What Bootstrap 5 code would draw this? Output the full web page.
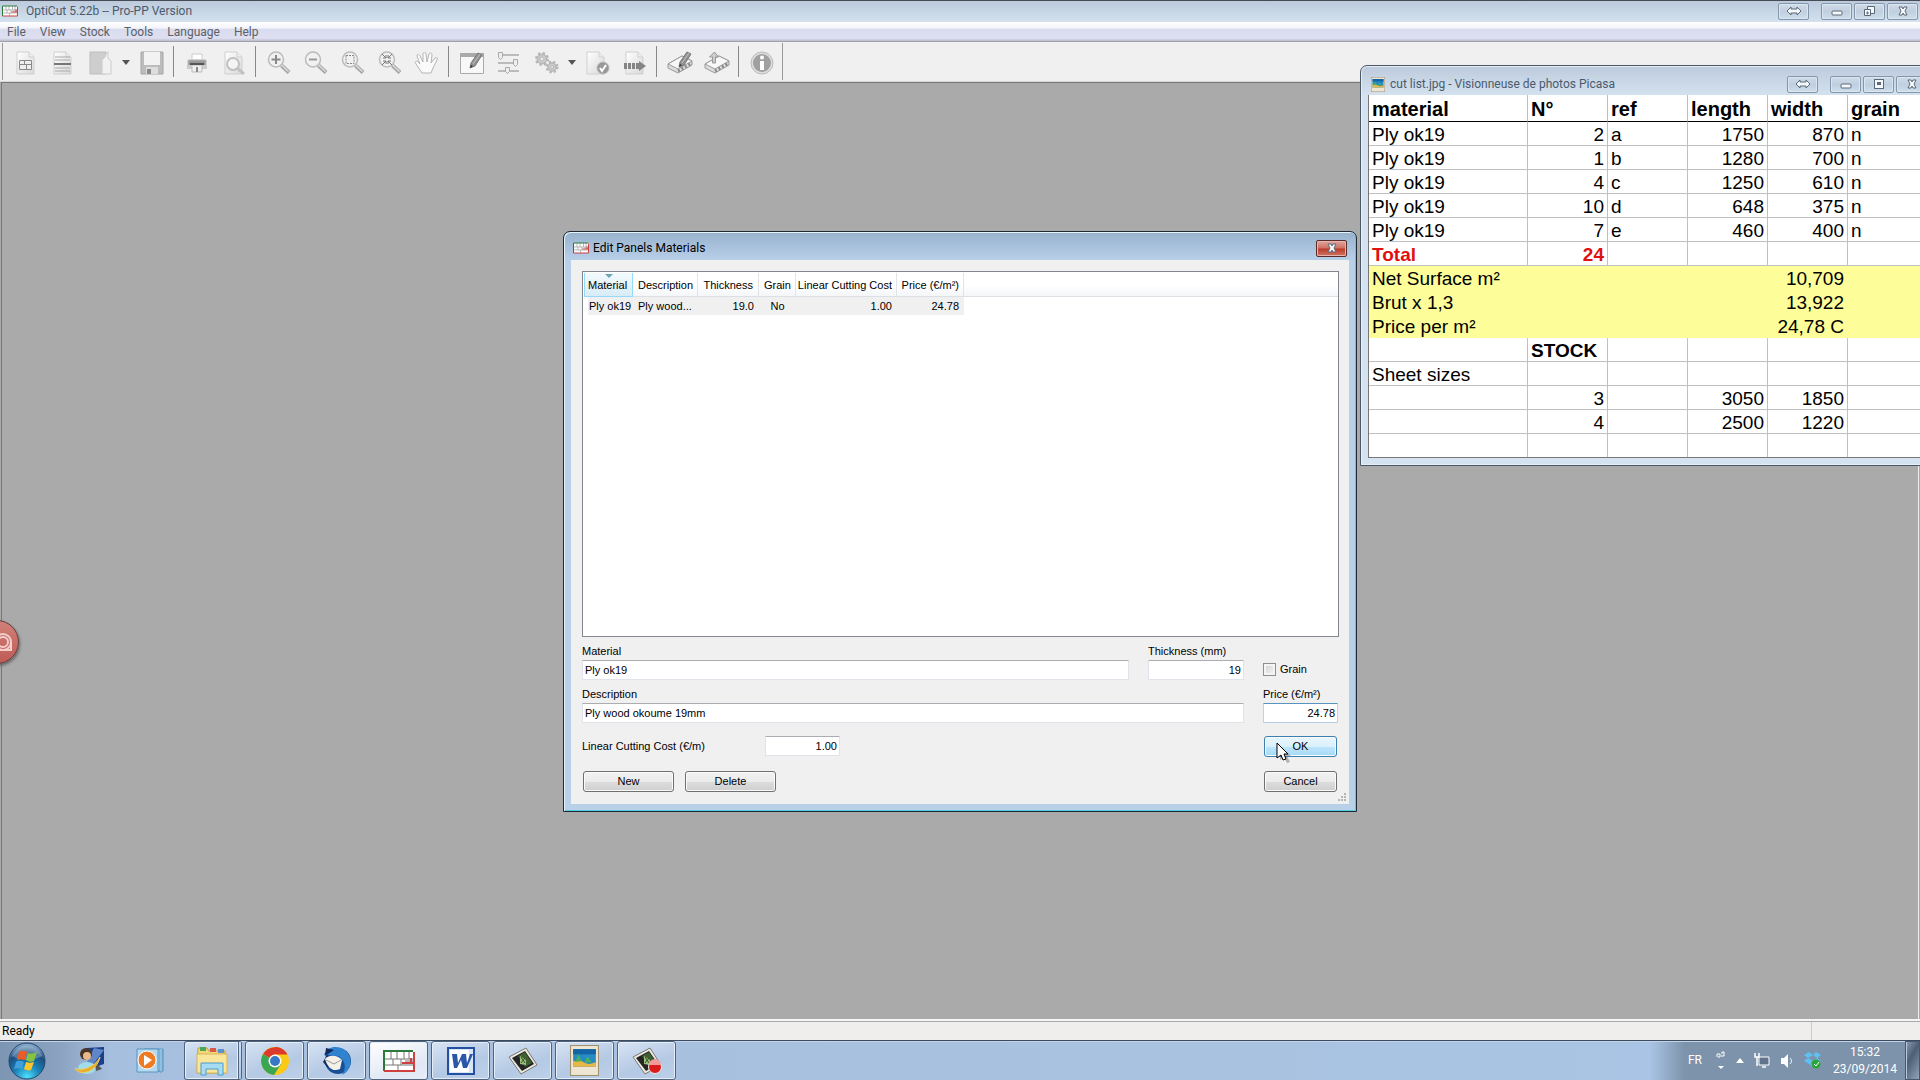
<!DOCTYPE html>
<html lang="en">
<head>
<meta charset="utf-8">
<meta name="viewport" content="width=device-width, initial-scale=1">
<title>OptiCut 5.22b -- Pro-PP Version</title>
<link href="https://cdn.jsdelivr.net/npm/bootstrap@5.3.0/dist/css/bootstrap.min.css" rel="stylesheet">
<style>
  body { font-family: Roboto, "Open Sans", sans-serif; font-size: 12px; line-height: 16px; background: #aaa; color: #000; }
  svg { display: block; flex: none; }
  button { font: inherit; color: inherit; }
  .aero-bar { height: 22px; background: linear-gradient(#bccadc, #d3e2ee); border-top: 1px solid #454c58; color: #4a5a6c; padding: 0 2px 1px; }
  .win-btns { display: flex; gap: 2px; }
  .win-btns button:first-child { margin-right: 10px; }
  .win-btn { width: 31px; height: 17px; border: 1px solid #8496ab; border-radius: 2px; background: linear-gradient(#d0dbe8, #c0cfdf 50%, #cfdeeb); padding: 0; flex: none; display: flex; align-items: center; justify-content: center; box-shadow: inset 0 0 0 1px #dbe6f0; }
  .menu-bar { height: 20px; background: linear-gradient(#fff, #f4f5fb 30%, #d9dcee 40%, #dee0f2 85%, #bbbccb); border-bottom: 1px solid #a0a0a8; padding: 1px 7px 0; gap: 14px; }
  .menu-bar a { color: #5d6168; text-decoration: none; }
  .tool-bar { height: 40px; background: #f0f0f0; border-bottom: 1px solid #d8d8d8; padding-left: 2px; }
  .tool-group { border-left: 1px solid #999; border-right: 1px solid #999; padding: 0 2px 0 4px; height: 37px; }
  .tool-btn { width: 37px; height: 37px; border: 0; background: none; padding: 2px 0 0; display: flex; align-items: center; justify-content: center; }
  .tool-arrow { width: 15px; }
  .tool-sep { width: 8px; height: 31px; }
  .tool-sep::before { content: ""; display: block; width: 1px; height: 100%; background: #888; margin-left: 3px; }
  .client { background: #aaa; border: 1px solid #777; border-right-color: #eee; border-bottom: 0; margin: 0 1px; }
  .status-bar { height: 19px; background: #f0eeed; border-top: 1px solid #a8a8a8; box-shadow: 0 -2px 0 #f5f5f5; padding-left: 2px; }
  .status-pane { width: 109px; border-left: 1px solid #ccc; }

  .photo-win { position: absolute; top: 65px; right: -18px; width: 578px; border: 1px solid #4d5866; border-radius: 7px 7px 0 0; background: linear-gradient(#bccadc, #d5e3f0 30px); padding: 0 7px 7px; color: #4a5a6c; box-shadow: inset 0 0 0 1px #e4eef8; }
  .photo-title { height: 29px; padding: 7px 3px 0 3px; gap: 5px; }
  .sheet { width: 100%; background: #fff; border: 1px solid #777; border-top: 0; font-family: "Liberation Sans", Arial, sans-serif; font-size: 19px; line-height: 21px; color: #000; table-layout: fixed; border-collapse: separate; border-spacing: 0; }
  .sheet td, .sheet th { border-right: 1px solid #c0c0c0; border-bottom: 1px solid #c0c0c0; height: 24px; padding: 2px 3px 0; white-space: nowrap; }
  .sheet th { font-size: 20px; height: 27px; line-height: 24px; border-bottom-color: #000; }
  .sheet tr:last-child td { height: 23px; border-bottom: 0; }
  .sheet .yellow td { background: #fdfd99; border-color: #fdfd99; }
  .sheet .total-row { color: #e01010; }
  .col-wide { width: 159px; }
  .col-num { width: 80px; }

  .dialog-layer { position: absolute; inset: 0 0 38px; pointer-events: none; }
  .panel-win { position: relative; pointer-events: auto; width: 794px; border: 1px solid #1d2a35; border-radius: 7px 7px 0 0; background: linear-gradient(#98b2cd, #b9d0e9 29px); padding: 0 7px 7px; box-shadow: inset 1px 1px 0 #e6f2fb, inset -1px -1px 0 #51d0e4; }
  .panel-title { height: 28px; padding: 5px 2px 0 2px; }
  .close-btn { width: 31px; height: 17px; border: 1px solid #5b2a2a; border-radius: 2px; padding: 0; background: linear-gradient(#dea79f, #cf6f62 48%, #bb3a29 52%, #ce7564); display: flex; align-items: center; justify-content: center; box-shadow: inset 0 0 0 1px #e6b4ac; }
  .panel-body { background: #f0f0f0; font-family: "Liberation Sans", Arial, sans-serif; font-size: 11px; padding: 11px 11px 12px; position: relative; }
  .list-pane { height: 366px; background: #fff; border: 1px solid #828790; padding: 1px 0 0 1px; margin-right: -1px; }
  .list-head { background: linear-gradient(#fff 12px, #f4f6f9 23px, #dcdfe4 23px, #dcdfe4 24px, #fff 24px); }
  .grid-list { table-layout: fixed; width: 380px; border-collapse: separate; border-spacing: 0; line-height: 16px; }
  .grid-list th { height: 24px; font-weight: 400; padding: 2px 5px 0; border-right: 1px solid #e0e3e8; border-bottom: 1px solid #dcdfe4; background: linear-gradient(#fff 50%, #f4f6f9); white-space: nowrap; }
  .grid-list th.sorted { background: linear-gradient(#f3fafd, #d8ecf6); border: 1px solid #96d9f9; border-top: 0; position: relative; padding: 2px 3px 0; }
  .grid-list th.tight { padding-left: 0; padding-right: 4px; }
  .grid-list th.sorted svg { position: absolute; top: 1px; left: 20px; }
  .grid-list td { height: 18px; padding: 0 5px; background: #f0f0f0; white-space: nowrap; }
  .grid-list td:first-child { background: linear-gradient(90deg, #fff 4px, #f0f0f0 4px); }
  .c-mat { width: 49px; } .c-desc { width: 65px; } .c-thick { width: 61px; } .c-grain { width: 37px; } .c-cost { width: 101px; } .c-price { width: 67px; }
  .field-row { gap: 19px; padding-top: 6px; }
  .narrow { width: 75px; }
  .medium { width: 96px; }
  .text-field { display: block; width: 100%; height: 20px; border: 1px solid #e2e3ea; border-top-color: #abadb3; border-radius: 1px; padding: 0 2px; background: #fff; font: inherit; line-height: 16px; color: #000; outline: 0; }
  .text-field.active-field { border-color: #5794bf #b7d5ea #b5cfe7; }
  .panel-body label { display: block; line-height: 17px; }
  .grain-box { appearance: none; width: 13px; height: 13px; border: 1px solid #8e8f8f; background: linear-gradient(135deg, #cfd2d5, #f6f6f6); box-shadow: inset 0 0 0 2px #f4f4f4; margin: 0; }
  .grain-row { height: 37px; padding-top: 17px; }
  .push-btn { width: 91px; height: 21px; padding: 0; border: 1px solid #707070; border-radius: 3px; background: linear-gradient(#f2f2f2, #ebebeb 50%, #ddd 51%, #cfcfcf); box-shadow: inset 0 0 0 1px #fafafa; line-height: 16px; }
  .side-btn { width: 73px; margin-right: 1px; }
  .hot-btn { border-color: #3c7fb1; background: linear-gradient(#eaf6fd, #d9f0fc 50%, #bee6fd 51%, #a7d9f5); }
  .cost-row { padding-top: 13px; }
  .cost-label { width: 183px; }
  .action-row { padding: 14px 0 0 1px; gap: 11px; }
  .pointer { position: absolute; left: 705px; top: 482px; }
  .grip { position: absolute; right: 2px; bottom: 2px; }
  .rec-badge { position: absolute; left: -25px; top: 620px; width: 44px; height: 44px; border-radius: 50%; background: linear-gradient(#d08079, #c05b55); border: 1px solid #5e3b3a; box-shadow: 1px 2px 3px #666; }
  .rec-badge svg { position: absolute; left: 18px; top: 12px; }

  .task-bar { height: 40px; border-top: 1px solid #3c4c60; background: linear-gradient(90deg, #7c95b3, #8ba3c1 60px, #a6bfde 110px, #a9c2e0 60%, #a9c4e4 calc(100% - 270px), #7d93ab calc(100% - 235px), #7d93ab); box-shadow: inset 0 1px 0 #c3d3e8; }
  .task-btn { height: 39px; border: 0; background: none; padding: 0; display: flex; align-items: center; justify-content: center; width: 60px; }
  .task-btn.task-start { justify-content: flex-start; padding-left: 8px; }
  .task-btn.running { width: 59px; border: 1px solid #50647e; border-radius: 3px; background: linear-gradient(160deg, #d7e3f3, #b4c9e4 60%, #bdd0e8); box-shadow: inset 0 0 0 1px #e4edf8; }
  .task-btn.current { background: linear-gradient(160deg, #fff, #e0e8f4 70%, #e8eef8); }
  .task-btn.stacked { width: 58px; border-right: 4px double #50647e; }
  .task-apps { gap: 3px; padding-left: 4px; }
  .tray { color: #fff; line-height: 17px; gap: 10px; }
  .clock { width: 68px; text-align: center; }
  .desk-gap { padding-left: 0; margin-left: -4px; }
  .show-desk { width: 15px; height: 39px; border: 1px solid #47586c; background: linear-gradient(120deg, #8b9db2, #4d5f75 40%, #8fa3ba); padding: 0; box-shadow: inset 1px 0 0 #b9c8d8; }
</style>
<script src="https://cdn.jsdelivr.net/npm/bootstrap@5.3.0/dist/js/bootstrap.bundle.min.js"></script>
</head>
<body class="vh-100 overflow-hidden position-relative d-flex flex-column">

<svg width="0" height="0" class="position-absolute" aria-hidden="true">
  <defs>
    <linearGradient id="gl" x1="0" y1="0" x2="1" y2="1"><stop offset="0" stop-color="#fff"/><stop offset="1" stop-color="#d8d8d8"/></linearGradient>
    <radialGradient id="orb" cx=".5" cy=".95" r=".9"><stop offset="0" stop-color="#4fe0ff"/><stop offset=".4" stop-color="#1a83b8"/><stop offset=".75" stop-color="#1c4f80"/><stop offset="1" stop-color="#7fa5c6"/></radialGradient>
    <symbol id="app" viewBox="0 0 32 22"><rect x="1" y="1" width="30" height="20" fill="#fff"/><path d="M1 9h30M1 15h30M8 1v8M14 1v8M21 1v8M26 1v8M10 9v6M18 9v6M15 15v6M22 11h8" stroke="#777" stroke-width="1" fill="none"/><path d="M1 21V1h29" stroke="#2b7a3c" stroke-width="2" fill="none"/><path d="M1 21h30V2M19 13h12M28 8v5" stroke="#cf4040" stroke-width="2" fill="none"/></symbol>
    <symbol id="page" viewBox="0 0 24 24"><path d="M3 1h12l5 5v17H3z" fill="url(#gl)" stroke="#cfcfcf"/><path d="M15 1v5h5" fill="#eee" stroke="#cfcfcf"/></symbol>
    <symbol id="lens" viewBox="0 0 24 24"><path d="M14.500 14.500l7.500 7" stroke="#a6a6a6" stroke-width="4"/><path d="M14.500 14l7 6.500" stroke="#ddd" stroke-width="1.500"/><circle cx="9" cy="8.500" r="7.500" fill="#f1f1f1" stroke="#bbb" stroke-width="1.500"/></symbol>
    <symbol id="w-move" viewBox="0 0 16 10"><path d="M1 5l4-4v2h6V1l4 4-4 4V7H5v2z" fill="#f5f8fb" stroke="#5a6878"/></symbol>
    <symbol id="w-min" viewBox="0 0 12 10"><rect x="1" y="5" width="10" height="4" rx="1" fill="#f5f8fb" stroke="#5a6878"/></symbol>
    <symbol id="w-close" viewBox="0 0 12 10"><path d="M2 1h3l1 2 1-2h3L8 5l2 4H7L6 7 5 9H2l2-4z" fill="#f8fafc" stroke="#5a6878"/></symbol>
    <symbol id="photo" viewBox="0 0 28 30"><rect x=".5" y=".5" width="27" height="29" fill="#eee5d2" stroke="#a18f6d"/><path d="M3 4h22v17H3z" fill="#248bc4"/><path d="M3 4h22v5H3z" fill="#1465a5"/><path d="M5 17l3-8 4 8zM14 17l3-6 4 6z" fill="#4fae5a"/><path d="M3 15c5 3 6-1 11 2s7 0 11 0v4H3z" fill="#e7b845"/></symbol>
    <symbol id="cam" viewBox="0 0 32 28"><path d="M2 10L19 1l11 17-16 9z" fill="#eceadf" stroke="#777"/><path d="M5 11l13-7 9 13-12 7z" fill="#242424"/><path d="M11 9l7-4 7 11-7 4z" fill="#3f5f33"/><path d="M13 9l6 4v5l-6-1z" fill="#9cc07a"/><path d="M14 10l4 6M18 11l-4 5" stroke="#35512b"/></symbol>
    <symbol id="panel" viewBox="0 0 26 24"><path d="M1 13L15 5l10 5v4L11 22 1 17z" fill="#ddd" stroke="#999"/><path d="M1 13l10 5 14-8L15 5z" fill="#f8f8f8" stroke="#999"/><path d="M11 20l14-8" stroke="#888" stroke-width="3" stroke-dasharray="2 2"/></symbol>
    <symbol id="pencil" viewBox="0 0 14 18"><path d="M1 17l1-5L9 2l4 2-7 11z" fill="#929292" stroke="#777"/><path d="M4 13l7-10" stroke="#c0c0c0"/><path d="M1 17l1-3 2 1z" fill="#333"/></symbol>
  </defs>
</svg>

<header>
  <div class="aero-bar d-flex align-items-center">
    <svg width="16" height="12"><use href="#app"/></svg>
    <span class="ms-2 me-auto">OptiCut 5.22b -- Pro-PP Version</span>
    <div class="win-btns">
      <button class="win-btn" aria-label="Move"><svg width="16" height="10"><use href="#w-move"/></svg></button>
      <button class="win-btn" aria-label="Minimise"><svg width="12" height="10"><use href="#w-min"/></svg></button>
      <button class="win-btn" aria-label="Restore"><svg width="13" height="12" fill="#f5f8fb" stroke="#5a6878"><path d="M4.500 1.500h7v7h-7z"/><path d="M1.500 4.500h6v6h-6z"/><path d="M4 7h1v2H4z"/></svg></button>
      <button class="win-btn" aria-label="Close"><svg width="12" height="10"><use href="#w-close"/></svg></button>
    </div>
  </div>
  <nav class="menu-bar d-flex align-items-center" aria-label="Menu">
    <a href="#">File</a><a href="#">View</a><a href="#">Stock</a><a href="#">Tools</a><a href="#">Language</a><a href="#">Help</a>
  </nav>
  <div class="tool-bar d-flex align-items-center">
    <div class="tool-group d-flex align-items-center">
      <button class="tool-btn" aria-label="New job"><svg width="24" height="24"><use href="#page"/><path d="M5.500 9.500h12v9h-12zM5.500 13.500h12M10.500 9.500v4M12.500 13.500v5" fill="#eee" stroke="#888"/></svg></button>
      <button class="tool-btn" aria-label="Bars"><svg width="24" height="24"><use href="#page"/><path d="M4 6h15M4 9h15M4 17h15M4 20h15" stroke="#aaa"/><path d="M3 13h17" stroke="#777" stroke-width="2"/></svg></button>
      <button class="tool-btn" aria-label="Open"><svg width="24" height="24"><path d="M2 1h16v22H2z" fill="#cecece" stroke="#bdbdbd"/><path d="M14 23V9l3-3c2-4 1-5 3-5v6l3 3v13z" fill="#f1f1f1" stroke="#ccc"/></svg></button>
      <button class="tool-btn tool-arrow" aria-label="Open recent"><svg width="8" height="5"><path d="M0 0h8L4 5z" fill="#555"/></svg></button>
      <button class="tool-btn" aria-label="Save"><svg width="24" height="24"><path d="M1 1h22v22H1z" fill="#bcbcbc" stroke="#a5a5a5"/><path d="M4 1h16v13H4z" fill="#f2f2f2"/><path d="M6 16h12v7H6z" fill="#ddd"/><path d="M7 18h4v5H7z" fill="#888"/></svg></button>
      <span class="tool-sep"></span>
      <button class="tool-btn" aria-label="Print"><svg width="22" height="22"><path d="M6 2h10v6H6z" fill="#fff" stroke="#ccc"/><path d="M2 8h18v8H2z" fill="#999" stroke="#bbb"/><path d="M1 13h20v4H1z" fill="#ccc"/><path d="M6 13h10v7H6z" fill="#eee" stroke="#bbb"/><path d="M4 12h14" stroke="#555" stroke-width="2"/><path d="M10 15h2v5h-2z" fill="#888"/></svg></button>
      <button class="tool-btn" aria-label="Preview"><svg width="24" height="24"><use href="#page"/><path d="M15 17l7 6" stroke="#c2c2c2" stroke-width="3"/><circle cx="11" cy="13" r="6" fill="#f4f4f4" stroke="#c0c0c0" stroke-width="2"/></svg></button>
      <span class="tool-sep"></span>
      <button class="tool-btn" aria-label="Zoom in"><svg width="24" height="24"><use href="#lens"/><path d="M9 4v9M4.500 8.500h9" stroke="#888" stroke-width="2"/></svg></button>
      <button class="tool-btn" aria-label="Zoom out"><svg width="24" height="24"><use href="#lens"/><path d="M5 8.500h8" stroke="#999" stroke-width="2"/></svg></button>
      <button class="tool-btn" aria-label="Zoom area"><svg width="24" height="24"><use href="#lens"/><path d="M5 4.500h8v8H5z" fill="none" stroke="#888" stroke-dasharray="2 1"/></svg></button>
      <button class="tool-btn" aria-label="Zoom fit"><svg width="24" height="24"><use href="#lens"/><path d="M4 3l4 4M14 3l-4 4M4 14l4-4M14 14l-4-4M8 4v3H5M10 4v3h3M8 13v-3H5M10 13v-3h3" fill="none" stroke="#777"/></svg></button>
      <button class="tool-btn" aria-label="Pan"><svg width="26" height="24"><path d="M8 22L2 13c-2-3 1-4 3-1l1 1-3-8c0-2 2-2 3 0l3 6L9 3c0-2 3-2 3 0l1 8 2-8c1-2 3-1 3 1l-1 8 4-5c2-1 3 0 2 2l-4 8-2 5z" fill="#fafafa" stroke="#b5b5b5"/></svg></button>
      <span class="tool-sep"></span>
      <button class="tool-btn" aria-label="Edit"><svg width="26" height="24"><path d="M1.500 2.500h23v20h-23z" fill="#f8f8f8" stroke="#aaa"/><path d="M1 2h24v4H1z" fill="#aaa"/><use href="#pencil" x="10" y="0" width="14" height="18"/></svg></button>
      <button class="tool-btn" aria-label="Options"><svg width="24" height="24" fill="#eee" stroke="#a9a9a9"><path d="M6 4h16M1 12h15M1 20h8M13 20h9" stroke="#bbb" stroke-width="2"/><path d="M1.500 1.500h4v5l-2 2-2-2zM16.500 8.500h4v5l-2 2-2-2zM8.500 16.500h4v4l-2 2-2-2z"/></svg></button>
      <button class="tool-btn" aria-label="Optimise"><svg width="26" height="24" fill="#ccc" stroke="#b5b5b5"><circle cx="9" cy="8" r="5.500" stroke-width="3" stroke-dasharray="2.300 2"/><circle cx="9" cy="8" r="4.500"/><circle cx="9" cy="8" r="2" fill="#eee"/><circle cx="19" cy="16" r="5" stroke-width="3" stroke-dasharray="2 2"/><circle cx="19" cy="16" r="4"/><circle cx="19" cy="16" r="1.500" fill="#eee"/></svg></button>
      <button class="tool-btn tool-arrow" aria-label="Optimise options"><svg width="8" height="5"><path d="M0 0h8L4 5z" fill="#555"/></svg></button>
      <button class="tool-btn" aria-label="Check"><svg width="24" height="24"><use href="#page" x="-2"/><circle cx="17" cy="17" r="6" fill="#999" stroke="#bbb"/><path d="M14 17l2 3 4-6" fill="none" stroke="#fff" stroke-width="2"/></svg></button>
      <button class="tool-btn" aria-label="Export"><svg width="24" height="24"><use href="#page"/><path d="M1 12h3v6H1zM5 12h3v6H5zM9 12h3v6H9zM13 12h3v-2l7 5-7 5v-2h-3z" fill="#858585"/></svg></button>
      <span class="tool-sep"></span>
      <button class="tool-btn" aria-label="Edit panels"><svg width="26" height="24"><use href="#panel"/><use href="#pencil" x="11" y="-1" width="14" height="18"/></svg></button>
      <button class="tool-btn" aria-label="Load panels"><svg width="26" height="24"><use href="#panel"/><path d="M8.500 12V6h-3l5-5 4 5h-3v6z" fill="#ccc" stroke="#999"/></svg></button>
      <span class="tool-sep"></span>
      <button class="tool-btn" aria-label="About"><svg width="24" height="24"><circle cx="12" cy="12" r="11" fill="#ddd" stroke="#bbb"/><circle cx="12" cy="12" r="9" fill="#a0a0a0"/><path d="M10 10h4v9h-4z" fill="#fff"/><circle cx="12" cy="6.500" r="2" fill="#fff"/></svg></button>
    </div>
  </div>
</header>

<main class="client flex-grow-1"></main>

<div class="status-bar d-flex justify-content-between align-items-center">
  <span>Ready</span><span class="status-pane align-self-stretch"></span>
</div>

<div class="rec-badge"><svg width="24" height="22" fill="none" stroke="#f2cdc9" stroke-width="2"><circle cx="9" cy="9" r="8"/><circle cx="9" cy="9" r="5"/><path d="M17 9v8H5"/></svg></div>

<section class="photo-win" aria-label="cut list.jpg">
  <div class="photo-title d-flex align-items-center">
    <svg width="14" height="15"><use href="#photo"/></svg>
    <span class="me-auto">cut list.jpg - Visionneuse de photos Picasa</span>
    <div class="win-btns">
      <button class="win-btn" aria-label="Move"><svg width="16" height="10"><use href="#w-move"/></svg></button>
      <button class="win-btn" aria-label="Minimise"><svg width="12" height="10"><use href="#w-min"/></svg></button>
      <button class="win-btn" aria-label="Maximise"><svg width="12" height="10" stroke="#5a6878"><rect x="1.500" y=".5" width="9" height="9" fill="#f5f8fb"/><rect x="4.500" y="3.500" width="3" height="2" fill="#5a6878"/></svg></button>
      <button class="win-btn" aria-label="Close"><svg width="12" height="10"><use href="#w-close"/></svg></button>
    </div>
  </div>
  <table class="sheet">
    <colgroup><col class="col-wide"><col class="col-num"><col class="col-num"><col class="col-num"><col class="col-num"><col></colgroup>
    <thead><tr><th>material</th><th>N°</th><th>ref</th><th>length</th><th>width</th><th>grain</th></tr></thead>
    <tbody>
      <tr><td>Ply ok19</td><td class="text-end">2</td><td>a</td><td class="text-end">1750</td><td class="text-end">870</td><td>n</td></tr>
      <tr><td>Ply ok19</td><td class="text-end">1</td><td>b</td><td class="text-end">1280</td><td class="text-end">700</td><td>n</td></tr>
      <tr><td>Ply ok19</td><td class="text-end">4</td><td>c</td><td class="text-end">1250</td><td class="text-end">610</td><td>n</td></tr>
      <tr><td>Ply ok19</td><td class="text-end">10</td><td>d</td><td class="text-end">648</td><td class="text-end">375</td><td>n</td></tr>
      <tr><td>Ply ok19</td><td class="text-end">7</td><td>e</td><td class="text-end">460</td><td class="text-end">400</td><td>n</td></tr>
      <tr class="fw-bold total-row"><td>Total</td><td class="text-end">24</td><td></td><td></td><td></td><td></td></tr>
      <tr class="yellow"><td>Net Surface m²</td><td></td><td></td><td></td><td class="text-end">10,709</td><td></td></tr>
      <tr class="yellow"><td>Brut x 1,3</td><td></td><td></td><td></td><td class="text-end">13,922</td><td></td></tr>
      <tr class="yellow"><td>Price per m²</td><td></td><td></td><td></td><td class="text-end">24,78 C</td><td></td></tr>
      <tr><td></td><td class="fw-bold">STOCK</td><td></td><td></td><td></td><td></td></tr>
      <tr><td>Sheet sizes</td><td></td><td></td><td></td><td></td><td></td></tr>
      <tr><td></td><td class="text-end">3</td><td></td><td class="text-end">3050</td><td class="text-end">1850</td><td></td></tr>
      <tr><td></td><td class="text-end">4</td><td></td><td class="text-end">2500</td><td class="text-end">1220</td><td></td></tr>
      <tr><td></td><td></td><td></td><td></td><td></td><td></td></tr>
    </tbody>
  </table>
</section>

<div class="dialog-layer d-flex align-items-center justify-content-center">
  <section class="panel-win" aria-label="Edit Panels Materials">
    <div class="panel-title d-flex align-items-center">
      <svg width="16" height="12"><use href="#app"/></svg>
      <span class="ms-1 me-auto">Edit Panels Materials</span>
      <button class="close-btn" aria-label="Close"><svg width="12" height="10"><use href="#w-close"/></svg></button>
    </div>
    <form class="panel-body">
      <div class="list-pane">
        <div class="list-head">
          <table class="grid-list">
            <colgroup><col class="c-mat"><col class="c-desc"><col class="c-thick"><col class="c-grain"><col class="c-cost"><col class="c-price"></colgroup>
            <thead><tr><th class="sorted"><svg width="8" height="4"><path d="M0 0h8L4 4z" fill="#6ea3b8"/></svg>Material</th><th>Description</th><th class="text-end">Thickness</th><th class="text-center">Grain</th><th class="text-end tight">Linear Cutting Cost</th><th class="text-end tight">Price (€/m²)</th></tr></thead>
            <tbody><tr><td>Ply ok19</td><td>Ply wood...</td><td class="text-end">19.0</td><td class="text-center">No</td><td class="text-end">1.00</td><td class="text-end">24.78</td></tr></tbody>
          </table>
        </div>
      </div>
      <div class="field-row d-flex">
        <div class="flex-grow-1"><label for="mat">Material</label><input class="text-field" id="mat" type="text" value="Ply ok19"></div>
        <div class="medium"><label for="thick">Thickness (mm)</label><input class="text-field text-end" id="thick" type="text" value="19"></div>
        <div class="narrow grain-row d-flex align-items-center"><input class="grain-box" id="grain" type="checkbox"><label class="ms-1" for="grain">Grain</label></div>
      </div>
      <div class="field-row d-flex">
        <div class="flex-grow-1"><label for="desc">Description</label><input class="text-field" id="desc" type="text" value="Ply wood okoume 19mm"></div>
        <div class="narrow"><label for="price">Price (€/m²)</label><input class="text-field active-field text-end" id="price" type="text" value="24.78"></div>
      </div>
      <div class="cost-row d-flex align-items-center">
        <label class="cost-label" for="cost">Linear Cutting Cost (€/m)</label>
        <div class="narrow me-auto"><input class="text-field text-end" id="cost" type="text" value="1.00"></div>
        <button class="push-btn side-btn hot-btn" type="button">OK</button>
      </div>
      <div class="action-row d-flex">
        <button class="push-btn" type="button">New</button>
        <button class="push-btn me-auto" type="button">Delete</button>
        <button class="push-btn side-btn" type="button">Cancel</button>
      </div>
      <svg class="grip" width="9" height="9" fill="#b5b5b5"><path d="M6 0h2v2H6zM3 3h2v2H3zM6 3h2v2H6zM0 6h2v2H0zM3 6h2v2H3zM6 6h2v2H6z"/></svg>
      <svg class="pointer" width="16" height="22"><path d="M4 4v14l4-3 3 6 3-1-3-6h4z" fill="#555" opacity=".4"/><path d="M1 1v15l4-3 2 5 3-1-2-5h4z" fill="#fff" stroke="#000"/></svg>
    </form>
  </section>
</div>

<footer class="task-bar d-flex align-items-center">
  <button class="task-btn task-start" aria-label="Start"><svg width="38" height="38"><circle cx="19" cy="19" r="18" fill="url(#orb)" stroke="#27476b"/><path d="M4 14a16 16 0 0130 0c-9 5-20 5-30 0z" fill="#fff" opacity=".25"/><path d="M11 10c3-2 5-1 8 0l-2 8c-3-1-5-1-8 0z" fill="#ee5b24"/><path d="M20 11c3 1 5 1 9-1l-3 9c-3 1-5 1-8-1z" fill="#86c440"/><path d="M8 20c3-2 5-1 8 0l-2 7c-3-1-5-1-8 0z" fill="#3fa0dd"/><path d="M18 20c3 1 5 1 8 0l-3 8c-3 1-5 0-7-1z" fill="#fcc52c"/></svg></button>
  <button class="task-btn" aria-label="Messenger"><svg width="32" height="30"><path d="M12 2l18-1v17l-12 4z" fill="#1b3f8b"/><path d="M20 2l-8 16 6 2L30 4z" fill="#5f86c6"/><circle cx="12" cy="8" r="6" fill="#4a3424"/><circle cx="13" cy="10" r="4" fill="#e5b98b"/><ellipse cx="13" cy="22" rx="9" ry="6" fill="#9fdcec"/><path d="M21 16l7 7-6 2z" fill="#555"/><path d="M1 22c3 4 20 0 25-11-4 17-22 19-25 11z" fill="#e6ae2b" stroke="#f1cf60"/></svg></button>
  <button class="task-btn" aria-label="Media player"><svg width="30" height="28" viewBox="-3 0 30 28"><path d="M6 2h19v22H6z" fill="#a6cde8" stroke="#5594bf"/><path d="M22 2v23h2V2" fill="#d3ebf8" stroke="#5594bf"/><path d="M-1 2h21v23H-1z" fill="#b5d9ef" stroke="#5594bf"/><circle cx="9" cy="13" r="9" fill="#ee7b22" stroke="#fff" stroke-width="1"/><path d="M6 8l8 5-8 6z" fill="#fff"/></svg></button>
  <div class="task-apps d-flex">
    <button class="task-btn running stacked" aria-label="Explorer"><svg width="34" height="32"><path d="M3 3h9l2 3h16v22H2z" fill="#f2d879" stroke="#c79f42"/><path d="M5 2h6v4H5z" fill="#49a85a"/><path d="M15 3h6v4h-6z" fill="#d95a44"/><path d="M23 4h6v4h-6z" fill="#5b93ca"/><path d="M2 9h30v19H2z" fill="#f8e69b" stroke="#d8b45a"/><path d="M6 30V18h22v12h-5v-6H11v6z" fill="#a5dcf4" stroke="#4d9ccb"/></svg></button>
    <button class="task-btn running" aria-label="Chrome"><svg width="30" height="30" viewBox="0 0 30 30"><circle cx="15" cy="15" r="14" fill="#fbc916"/><path d="M15 15L3 8A14 14 0 0127 8H15z" fill="#de3a2b"/><path d="M15 1A14 14 0 0127.500 8.500H15z" fill="#de3a2b"/><path d="M3 8a14 14 0 0011 21l7-11-6-3z" fill="#3aa652"/><circle cx="15" cy="15" r="6.500" fill="#fff"/><circle cx="15" cy="15" r="5" fill="#3777c4"/></svg></button>
    <button class="task-btn running" aria-label="Thunderbird"><svg width="32" height="32"><circle cx="17" cy="16" r="13" fill="#194f96"/><path d="M3 10c3-10 16-10 22-4 8 8 5 20-4 24 5-8 3-15-4-19z" fill="#2f83cf"/><path d="M5 3l8 2-9 6zM2 17l4-7 5 2-4 11z" fill="#112b5c"/><path d="M4 14c4-5 13-4 17 1l-2 9c-6 3-12 0-15-10z" fill="#f3f1ea"/><path d="M5 15l8 4 7-4" fill="none" stroke="#9a9a9a"/></svg></button>
    <button class="task-btn running current" aria-label="OptiCut"><svg width="32" height="22"><use href="#app"/></svg></button>
    <button class="task-btn running" aria-label="Word"><svg width="28" height="28"><rect x="1" y="1" width="26" height="26" fill="#d9e5f7" stroke="#2450a0" stroke-width="2"/><path d="M3 3h19v22H3z" fill="#fff"/><path d="M5 7h5l1 9 4-9h4l1 9 3-9h3l-6 14h-4l-2-8-4 8H7z" fill="#2c56aa"/></svg></button>
    <button class="task-btn running" aria-label="Camtasia"><svg width="32" height="28"><use href="#cam"/></svg></button>
    <button class="task-btn running" aria-label="Picasa"><svg width="29" height="31"><use href="#photo"/></svg></button>
    <button class="task-btn running" aria-label="Recorder"><svg width="32" height="28"><use href="#cam"/><circle cx="24" cy="20" r="6.500" fill="#d91c1c" stroke="#eee"/><path d="M18 18a6 6 0 0112 0z" fill="#f49a9a"/></svg></button>
  </div>
  <div class="tray d-flex align-items-center ms-auto">
    <span class="pe-1">FR</span>
    <svg width="10" height="20" fill="#fff"><path d="M1 6V3h3v3H2M5 5h3V1H6v2" fill="none" stroke="#fff"/><path d="M2 15h6l-3 3z"/></svg>
    <svg width="8" height="5"><path d="M0 5h8L4 0z" fill="#fff"/></svg>
    <svg width="16" height="17"><path d="M5 5h10v8H5z" fill="#60758d" stroke="#fff"/><path d="M1 1v4h4V1M3 5v9M8 15h4" fill="none" stroke="#fff" stroke-width="1.500"/></svg>
    <svg width="14" height="14"><path d="M1 4h3l4-4v14l-4-4H1z" fill="#fff"/><path d="M10 4c2 2 2 4 0 6" fill="none" stroke="#fff"/></svg>
    <svg width="17" height="17"><path d="M5 0l4 3-5 3-4-3zM12 0l5 3-4 3-4-3zM4 6l5 3-4 3-5-3zM13 6l4 3-5 3-3-3zM5 12l4-2 4 2-4 3z" fill="#5fc0f2"/><circle cx="12" cy="12" r="4.500" fill="#2aa53a"/><path d="M10 12l2 2 3-4" fill="none" stroke="#fff"/></svg>
    <div class="clock">15:32<br>23/09/2014</div>
    <div class="desk-gap"><button class="show-desk d-block" aria-label="Show desktop"></button></div>
  </div>
</footer>
</body>
</html>
